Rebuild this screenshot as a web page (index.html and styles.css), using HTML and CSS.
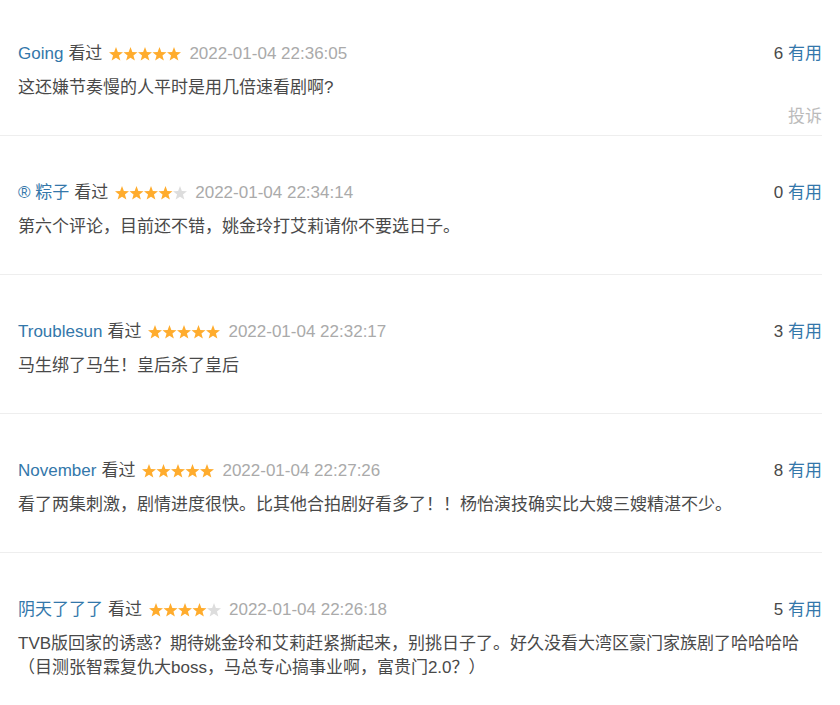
FILE: index.html
```html
<!DOCTYPE html>
<html lang="zh-CN">
<head>
  <meta charset="UTF-8" />
  <title>短评</title>
  <link rel="stylesheet" href="styles.css">
</head>
<body>
  <svg width="0" height="0" class="defs">
    <defs>
      <polygon id="star" points="7,0 8.85,4.95 14,5.2 9.95,8.45 11.35,13.6 7,10.65 2.65,13.6 4.05,8.45 0,5.2 5.15,4.95" />
    </defs>
  </svg>

  <div class="comment-list">
    <div class="comment-item show-report">
      <div class="comment-info">
        <a class="user">Going</a>
        <span class="watched">看过</span>
        <svg class="rating" viewBox="0 0 72 14">
          <use href="#star" x="0" class="on"/><use href="#star" x="14.5" class="on"/><use href="#star" x="29" class="on"/><use href="#star" x="43.5" class="on"/><use href="#star" x="58" class="on"/>
        </svg>
        <span class="time">2022-01-04 22:36:05</span>
        <span class="vote"><span class="count">6</span> <a>有用</a></span>
      </div>
      <p class="comment-text">这还嫌节奏慢的人平时是用几倍速看剧啊?</p>
      <div class="comment-foot"><a class="report">投诉</a></div>
    </div>

    <div class="comment-item">
      <div class="comment-info">
        <a class="user">® 粽子</a>
        <span class="watched">看过</span>
        <svg class="rating" viewBox="0 0 72 14">
          <use href="#star" x="0" class="on"/><use href="#star" x="14.5" class="on"/><use href="#star" x="29" class="on"/><use href="#star" x="43.5" class="on"/><use href="#star" x="58" class="off"/>
        </svg>
        <span class="time">2022-01-04 22:34:14</span>
        <span class="vote"><span class="count">0</span> <a>有用</a></span>
      </div>
      <p class="comment-text">第六个评论，目前还不错，姚金玲打艾莉请你不要选日子。</p>
      <div class="comment-foot"><a class="report">投诉</a></div>
    </div>

    <div class="comment-item">
      <div class="comment-info">
        <a class="user">Troublesun</a>
        <span class="watched">看过</span>
        <svg class="rating" viewBox="0 0 72 14">
          <use href="#star" x="0" class="on"/><use href="#star" x="14.5" class="on"/><use href="#star" x="29" class="on"/><use href="#star" x="43.5" class="on"/><use href="#star" x="58" class="on"/>
        </svg>
        <span class="time">2022-01-04 22:32:17</span>
        <span class="vote"><span class="count">3</span> <a>有用</a></span>
      </div>
      <p class="comment-text">马生绑了马生！皇后杀了皇后</p>
      <div class="comment-foot"><a class="report">投诉</a></div>
    </div>

    <div class="comment-item">
      <div class="comment-info">
        <a class="user">November</a>
        <span class="watched">看过</span>
        <svg class="rating" viewBox="0 0 72 14">
          <use href="#star" x="0" class="on"/><use href="#star" x="14.5" class="on"/><use href="#star" x="29" class="on"/><use href="#star" x="43.5" class="on"/><use href="#star" x="58" class="on"/>
        </svg>
        <span class="time">2022-01-04 22:27:26</span>
        <span class="vote"><span class="count">8</span> <a>有用</a></span>
      </div>
      <p class="comment-text">看了两集刺激，剧情进度很快。比其他合拍剧好看多了！！杨怡演技确实比大嫂三嫂精湛不少。</p>
      <div class="comment-foot"><a class="report">投诉</a></div>
    </div>

    <div class="comment-item">
      <div class="comment-info">
        <a class="user">阴天了了了</a>
        <span class="watched">看过</span>
        <svg class="rating" viewBox="0 0 72 14">
          <use href="#star" x="0" class="on"/><use href="#star" x="14.5" class="on"/><use href="#star" x="29" class="on"/><use href="#star" x="43.5" class="on"/><use href="#star" x="58" class="off"/>
        </svg>
        <span class="time">2022-01-04 22:26:18</span>
        <span class="vote"><span class="count">5</span> <a>有用</a></span>
      </div>
      <p class="comment-text">TVB版回家的诱惑？期待姚金玲和艾莉赶紧撕起来，别挑日子了。好久没看大湾区豪门家族剧了哈哈哈哈（目测张智霖复仇大boss，马总专心搞事业啊，富贵门2.0？）</p>
      <div class="comment-foot"><a class="report">投诉</a></div>
    </div>
  </div>
</body>
</html>
```

FILE: styles.css
```css
:root {
  --link: #3377aa;
  --text: #494949;
  --muted: #aaaaaa;
  --line: #eeeeee;
  --star: #ffac2d;
  --star-off: #dddddd;
}

* {
  box-sizing: border-box;
}

body {
  margin: 0;
  background: #fff;
  color: var(--text);
  font-family: "Liberation Sans", "Noto Sans CJK SC", sans-serif;
  font-size: 17px;
}

.defs {
  position: absolute;
}

.comment-list {
  width: 822px;
}

.comment-item {
  padding: 45px 0 6px 18px;
  border-bottom: 1px solid var(--line);
}

.comment-item:first-child {
  padding-top: 42px;
}

.comment-info {
  display: flex;
  align-items: center;
  height: 24px;
  line-height: 24px;
  white-space: nowrap;
}

.user {
  color: var(--link);
}

.watched {
  margin-left: 5px;
}

.rating {
  width: 72px;
  height: 14px;
  margin-left: 7px;
}

.rating .on {
  fill: var(--star);
}

.rating .off {
  fill: var(--star-off);
}

.time {
  margin-left: 8px;
  color: var(--muted);
}

.vote {
  margin-left: auto;
}

.vote a {
  color: var(--link);
}

.comment-text {
  margin: 10px 0 0;
  line-height: 24px;
}

.comment-foot {
  margin-top: 5px;
  height: 24px;
  line-height: 24px;
  text-align: right;
}

.report {
  color: #bbbbbb;
  visibility: hidden;
}

.show-report .report {
  visibility: visible;
}
```
